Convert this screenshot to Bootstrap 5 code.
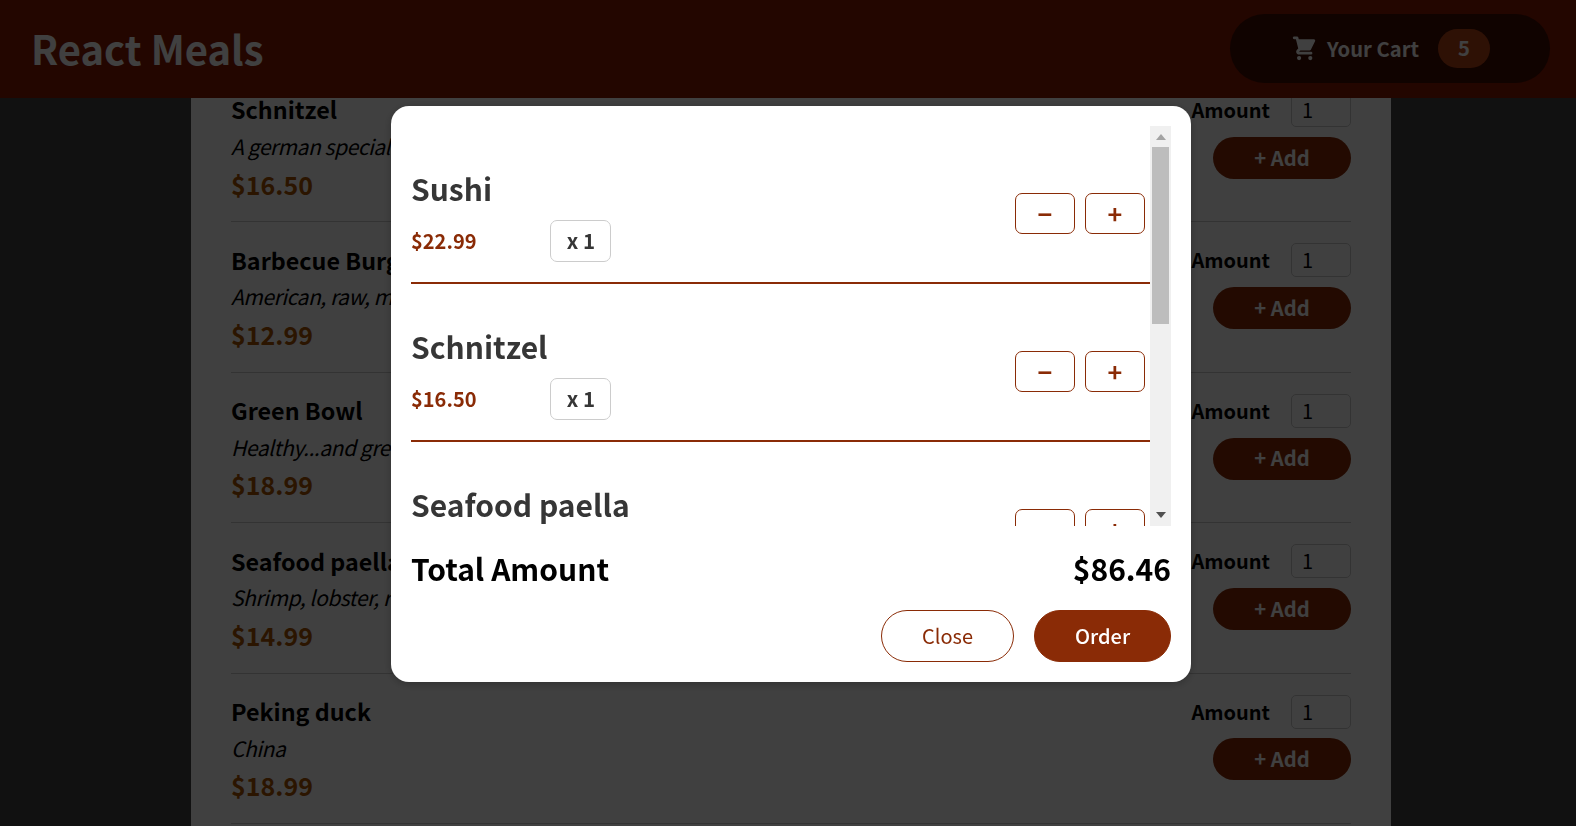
<!DOCTYPE html>
<html lang="en">
<head>
<meta charset="utf-8">
<title>React Meals</title>
<link href="https://cdn.jsdelivr.net/npm/bootstrap@5.3.0/dist/css/bootstrap.min.css" rel="stylesheet">
<style>
html,body{height:100%;overflow:hidden;}
body{font-family:"Noto Sans CJK JP","Noto Sans",sans-serif;background:#464646;color:#000;}
.page-wrap{width:1576px;}
.top-bar{position:fixed;top:0;left:0;width:1582px;height:98px;background:#8a1802;color:#fff;padding:0 32px 0 31px;z-index:10;}
.top-bar h1{font-size:40px;font-weight:700;margin:-2px 0 0;}
.cart-pill{width:320px;height:69px;margin-top:-1px;background:#400c00;border:0;border-radius:35px;color:#fff;font-size:20.2px;font-weight:700;gap:10px;padding:2px 0 0 0;}
.pill-label{margin-left:-1px;margin-right:1px;}
.cart-pill svg{width:28px;height:28px;fill:#fff;margin-top:-2px;}
.cart-count{width:52px;height:39px;border-radius:20px;background:#b94517;margin:-2px 0 0 8px;}
.meal-sheet{width:1200px;margin:0 0 0 191px;background:#fff;padding:72px 40px 4px;}
.meal-row{height:150.4px;border-bottom:1px solid #ccc;padding-top:19.4px;}
.meal-name{font-size:23.3px;font-weight:700;line-height:36px;}
.meal-desc{font-size:21px;font-style:italic;line-height:36px;margin-top:.6px;letter-spacing:-.45px;}
.meal-price{font-size:25px;font-weight:700;color:#ad5502;line-height:38px;margin-top:.6px;}
.amount-line{font-size:20px;font-weight:700;gap:21px;height:34px;margin-top:1.6px;}
.amount-box{width:60px;height:34px;border:1px solid #ccc;border-radius:5px;font-weight:400;padding-left:10px;line-height:32px;}
.add-btn{display:block;width:138px;height:42px;margin:9.8px 0 0 auto;background:#8a2b06;color:#fff;border:0;border-radius:21px;font-size:20.2px;font-weight:700;padding:0;}
.shade{position:fixed;inset:0;background:rgba(0,0,0,.75);z-index:20;}
.cart-modal{position:fixed;top:106px;left:391px;width:800px;height:576px;background:#fff;border-radius:18px;padding:20px;z-index:30;box-shadow:0 2px 8px rgba(0,0,0,.25);}
.cart-view{height:400px;}
.cart-scroll{width:739px;height:400px;overflow:hidden;}
.fake-bar{width:21px;height:400px;background:#f0f0f0;}
.bar-arrow{height:21px;}
.bar-arrow svg{width:10px;height:6px;}
.bar-up{fill:#a3a3a3;padding-top:1px;}
.bar-down{fill:#505050;margin-top:auto;padding-bottom:2px;}
.bar-thumb{height:177px;margin:0 2px;background:#bdbdbd;}
.cart-line{height:158px;border-bottom:2px solid #8a2b06;padding:40px 5px 0 0;}
.line-name{font-size:30px;font-weight:700;color:#363636;line-height:44px;margin:0;}
.line-meta{margin-top:10px;height:42px;}
.line-price{width:139px;color:#8a2b06;font-size:20px;font-weight:700;padding-bottom:1px;}
.line-qty{width:61px;height:42px;border:1px solid #ccc;border-radius:7px;color:#363636;font-size:20.5px;font-weight:700;padding:0 0 2px 1px;}
.step-btn{width:60px;height:41px;border:1px solid #8a2b06;border-radius:7px;background:#fff;color:#8a2b06;font-size:25px;font-weight:700;padding:0;line-height:1;}
.line-steps{gap:10px;margin-top:27px;}
.total-line{font-size:30px;font-weight:700;height:84px;}
.foot-actions{gap:20px;}
.pill-close,.pill-order{height:52px;border-radius:26px;font-size:20px;border:1px solid #8a2b06;padding:0 0 1px;}
.pill-close{width:133px;background:#fff;color:#8a2b06;}
.pill-order{width:137px;background:#8a2b06;color:#fff;font-weight:500;}
</style>
</head>
<body>
<div class="page-wrap">
  <header class="top-bar d-flex justify-content-between align-items-center">
    <h1>React Meals</h1>
    <button class="cart-pill d-flex align-items-center justify-content-center" type="button">
      <svg viewBox="0 0 20 20" aria-hidden="true"><path d="M3 1a1 1 0 000 2h1.22l.305 1.222a.997.997 0 00.01.042l1.358 5.43-.893.892C3.74 11.846 4.632 14 6.414 14H15a1 1 0 000-2H6.414l1-1H14a1 1 0 00.894-.553l3-6A1 1 0 0017 3H6.28l-.31-1.243A1 1 0 005 1H3zM16 16.5a1.5 1.5 0 11-3 0 1.5 1.5 0 013 0zM6.5 18a1.5 1.5 0 100-3 1.5 1.5 0 000 3z"/></svg>
      <span class="pill-label">Your Cart</span>
      <span class="cart-count d-flex align-items-center justify-content-center">5</span>
    </button>
  </header>
  <main class="meal-sheet">
    <div class="meal-row d-flex justify-content-between">
      <div><div class="meal-name">Schnitzel</div><div class="meal-desc">A german specialty!</div><div class="meal-price">$16.50</div></div>
      <div><div class="amount-line d-flex align-items-center"><span>Amount</span><span class="amount-box">1</span></div><button class="add-btn" type="button">+ Add</button></div>
    </div>
    <div class="meal-row d-flex justify-content-between">
      <div><div class="meal-name">Barbecue Burger</div><div class="meal-desc">American, raw, meaty</div><div class="meal-price">$12.99</div></div>
      <div><div class="amount-line d-flex align-items-center"><span>Amount</span><span class="amount-box">1</span></div><button class="add-btn" type="button">+ Add</button></div>
    </div>
    <div class="meal-row d-flex justify-content-between">
      <div><div class="meal-name">Green Bowl</div><div class="meal-desc">Healthy...and green...</div><div class="meal-price">$18.99</div></div>
      <div><div class="amount-line d-flex align-items-center"><span>Amount</span><span class="amount-box">1</span></div><button class="add-btn" type="button">+ Add</button></div>
    </div>
    <div class="meal-row d-flex justify-content-between">
      <div><div class="meal-name">Seafood paella</div><div class="meal-desc">Shrimp, lobster, rice</div><div class="meal-price">$14.99</div></div>
      <div><div class="amount-line d-flex align-items-center"><span>Amount</span><span class="amount-box">1</span></div><button class="add-btn" type="button">+ Add</button></div>
    </div>
    <div class="meal-row d-flex justify-content-between">
      <div><div class="meal-name">Peking duck</div><div class="meal-desc">China</div><div class="meal-price">$18.99</div></div>
      <div><div class="amount-line d-flex align-items-center"><span>Amount</span><span class="amount-box">1</span></div><button class="add-btn" type="button">+ Add</button></div>
    </div>
  </main>
</div>
<div class="shade"></div>
<section class="cart-modal">
  <div class="cart-view d-flex">
    <div class="cart-scroll">
      <div class="cart-line d-flex justify-content-between">
        <div><h2 class="line-name">Sushi</h2><div class="line-meta d-flex align-items-center"><span class="line-price">$22.99</span><span class="line-qty d-flex align-items-center justify-content-center">x 1</span></div></div>
        <div class="line-steps d-flex align-items-start"><button class="step-btn" type="button">−</button><button class="step-btn" type="button">+</button></div>
      </div>
      <div class="cart-line d-flex justify-content-between">
        <div><h2 class="line-name">Schnitzel</h2><div class="line-meta d-flex align-items-center"><span class="line-price">$16.50</span><span class="line-qty d-flex align-items-center justify-content-center">x 1</span></div></div>
        <div class="line-steps d-flex align-items-start"><button class="step-btn" type="button">−</button><button class="step-btn" type="button">+</button></div>
      </div>
      <div class="cart-line d-flex justify-content-between">
        <div><h2 class="line-name">Seafood paella</h2><div class="line-meta d-flex align-items-center"><span class="line-price">$14.99</span><span class="line-qty d-flex align-items-center justify-content-center">x 1</span></div></div>
        <div class="line-steps d-flex align-items-start"><button class="step-btn" type="button">−</button><button class="step-btn" type="button">+</button></div>
      </div>
    </div>
    <div class="fake-bar d-flex flex-column" aria-hidden="true">
      <div class="bar-arrow bar-up d-flex align-items-center justify-content-center"><svg viewBox="0 0 10 6"><path d="M0 6L5 0L10 6Z"/></svg></div>
      <div class="bar-thumb"></div>
      <div class="bar-arrow bar-down d-flex align-items-center justify-content-center"><svg viewBox="0 0 10 6"><path d="M0 0L10 0L5 6Z"/></svg></div>
    </div>
  </div>
  <div class="total-line d-flex justify-content-between align-items-center"><span>Total Amount</span><span>$86.46</span></div>
  <div class="foot-actions d-flex justify-content-end"><button class="pill-close" type="button">Close</button><button class="pill-order" type="button">Order</button></div>
</section>
<script src="https://cdn.jsdelivr.net/npm/bootstrap@5.3.0/dist/js/bootstrap.bundle.min.js"></script>
</body>
</html>
